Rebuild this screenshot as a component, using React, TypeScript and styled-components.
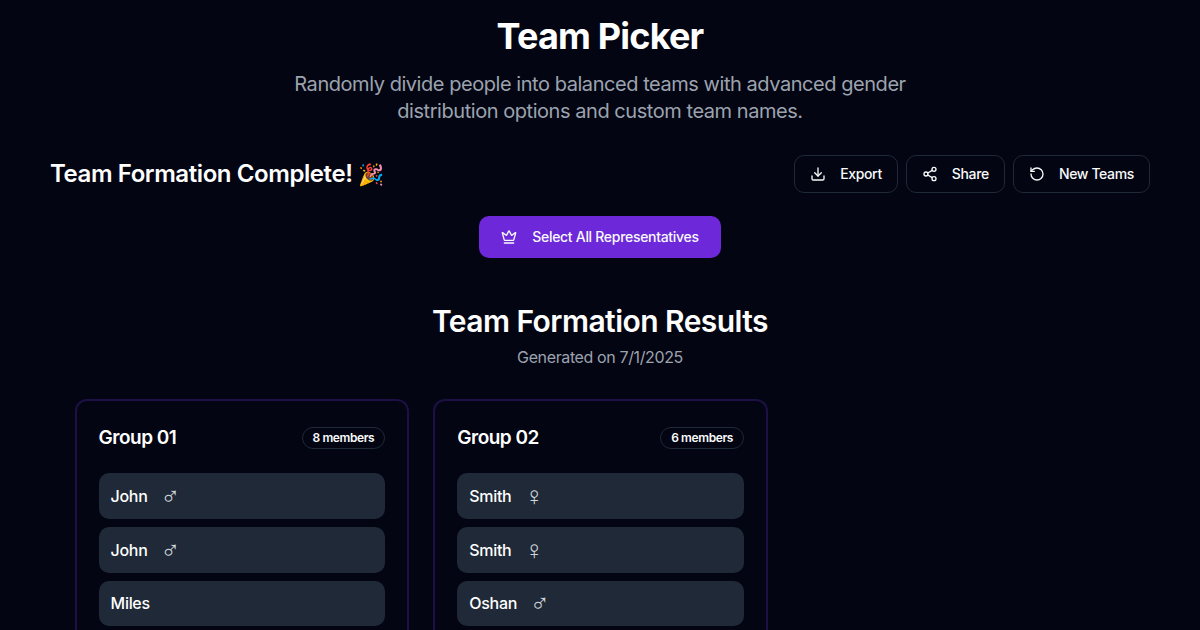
import React from 'react';
import styled, { createGlobalStyle } from 'styled-components';
import { Crown, Download, RotateCcw, Share2 } from 'lucide-react';

const GlobalStyle = createGlobalStyle`
  html, body {
    margin: 0;
    height: 630px;
    overflow: hidden;
    background: #030512;
  }
  body {
    font-family: Inter, "Noto Sans", sans-serif;
    color: #fff;
  }
`;

type Member = { name: string; gender?: 'male' | 'female' };

const groups: { title: string; count: number; members: Member[] }[] = [
  {
    title: 'Group 01',
    count: 8,
    members: [
      { name: 'John', gender: 'male' },
      { name: 'John', gender: 'male' },
      { name: 'Miles' },
    ],
  },
  {
    title: 'Group 02',
    count: 6,
    members: [
      { name: 'Smith', gender: 'female' },
      { name: 'Smith', gender: 'female' },
      { name: 'Oshan', gender: 'male' },
    ],
  },
];

const genderGlyph = { male: '♂', female: '♀' };

export default function App() {
  return (
    <Page>
      <GlobalStyle />
      <Hero>
        <HeroTitle>Team Picker</HeroTitle>
        <HeroText>
          Randomly divide people into balanced teams with advanced gender distribution options and
          custom team names.
        </HeroText>
      </Hero>

      <Toolbar>
        <ToolbarTitle>
          Team Formation Complete! <Emoji>🎉</Emoji>
        </ToolbarTitle>
        <Actions>
          <OutlineButton>
            <Download size={16} />
            Export
          </OutlineButton>
          <OutlineButton>
            <Share2 size={16} />
            Share
          </OutlineButton>
          <OutlineButton>
            <RotateCcw size={16} />
            New Teams
          </OutlineButton>
        </Actions>
      </Toolbar>

      <Center>
        <PrimaryButton>
          <Crown size={16} />
          Select All Representatives
        </PrimaryButton>
      </Center>

      <Results>
        <ResultsTitle>Team Formation Results</ResultsTitle>
        <ResultsDate>Generated on 7/1/2025</ResultsDate>
      </Results>

      <CardGrid>
        {groups.map((group) => (
          <Card key={group.title}>
            <CardHeader>
              <CardTitle>{group.title}</CardTitle>
              <Badge>{group.count} members</Badge>
            </CardHeader>
            <MemberList>
              {group.members.map((member, index) => (
                <MemberRow key={index}>
                  <MemberName>{member.name}</MemberName>
                  {member.gender && <Gender>{genderGlyph[member.gender]}</Gender>}
                </MemberRow>
              ))}
            </MemberList>
          </Card>
        ))}
      </CardGrid>
    </Page>
  );
}

const Page = styled.div`
  width: 1100px;
  margin: 0 auto;
  height: 630px;
  overflow: hidden;
`;

const Hero = styled.header`
  display: flex;
  flex-direction: column;
  align-items: center;
  padding-top: 16px;
`;

const HeroTitle = styled.h1`
  margin: 0;
  font-size: 36px;
  line-height: 40px;
  font-weight: 700;
  letter-spacing: -0.8px;
`;

const HeroText = styled.p`
  margin: 15px 0 0;
  width: 672px;
  text-align: center;
  font-size: 20px;
  line-height: 27px;
  letter-spacing: -0.45px;
  color: #9ca3af;
`;

const Toolbar = styled.div`
  display: flex;
  align-items: center;
  justify-content: space-between;
  margin-top: 30px;
`;

const ToolbarTitle = styled.h2`
  margin: 0;
  font-size: 24px;
  line-height: 32px;
  font-weight: 600;
  letter-spacing: -0.42px;
`;

const Emoji = styled.span`
  font-size: 21px;
`;

const Actions = styled.div`
  display: flex;
  gap: 8px;
`;

const OutlineButton = styled.button`
  display: inline-flex;
  align-items: center;
  gap: 14px;
  height: 38px;
  padding: 0 15px;
  border: 1px solid #1f2937;
  border-radius: 10px;
  background: #030512;
  color: #f9fafb;
  font: 500 14px/20px Inter, sans-serif;
  letter-spacing: -0.35px;
`;

const Center = styled.div`
  display: flex;
  justify-content: center;
  margin-top: 23px;
`;

const PrimaryButton = styled.button`
  display: inline-flex;
  align-items: center;
  gap: 15px;
  height: 42px;
  padding: 0 22px;
  border: none;
  border-radius: 10px;
  background: #6d28d9;
  color: #f9fafb;
  font: 500 14px/20px Inter, sans-serif;
  letter-spacing: -0.3px;
`;

const Results = styled.div`
  display: flex;
  flex-direction: column;
  align-items: center;
  margin-top: 45px;
`;

const ResultsTitle = styled.h2`
  margin: 0;
  font-size: 30px;
  line-height: 36px;
  font-weight: 600;
  letter-spacing: -0.55px;
`;

const ResultsDate = styled.p`
  margin: 6px 0 0;
  font-size: 16px;
  line-height: 24px;
  letter-spacing: -0.38px;
  color: #9ca3af;
`;

const CardGrid = styled.div`
  display: grid;
  grid-template-columns: repeat(3, 334.7px);
  gap: 24px;
  margin: 30px 0 0 24.6px;
`;

const Card = styled.section`
  padding: 22.5px 22px 22px;
  border: 2px solid #1c1044;
  border-radius: 12px;
`;

const CardHeader = styled.div`
  display: flex;
  align-items: center;
  justify-content: space-between;
  margin-bottom: 21.5px;
`;

const CardTitle = styled.h3`
  margin: 0;
  font-size: 19px;
  line-height: 28px;
  font-weight: 600;
  letter-spacing: -0.5px;
`;

const Badge = styled.span`
  padding: 2px 10px;
  border: 1px solid #1f2937;
  border-radius: 999px;
  font-size: 12px;
  line-height: 16px;
  font-weight: 600;
  letter-spacing: -0.4px;
  color: #f9fafb;
`;

const MemberList = styled.div`
  display: flex;
  flex-direction: column;
  gap: 8px;
`;

const MemberRow = styled.div`
  display: flex;
  align-items: center;
  gap: 13px;
  height: 45.75px;
  padding: 0 12px;
  border-radius: 10px;
  background: #1f2937;
`;

const MemberName = styled.span`
  font-size: 16px;
  line-height: 24px;
  font-weight: 500;
  letter-spacing: -0.3px;
`;

const Gender = styled.span`
  font-family: "Liberation Sans", sans-serif;
  font-size: 26px;
  font-weight: 400;
  line-height: 24px;
  color: #d1d5db;
`;
